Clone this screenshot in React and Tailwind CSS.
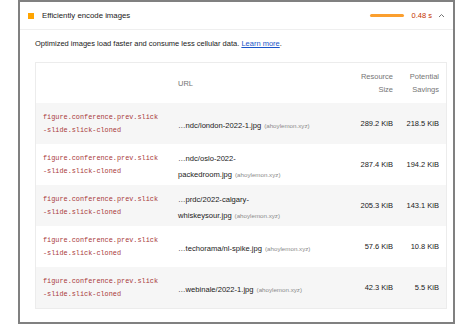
import React from "react";

const rows = [
  { url: ["…ndc/london-2022-1.jpg"], size: "289.2 KiB", save: "218.5 KiB" },
  { url: ["…ndc/oslo-2022-", "packedroom.jpg"], size: "287.4 KiB", save: "194.2 KiB" },
  { url: ["…prdc/2022-calgary-", "whiskeysour.jpg"], size: "205.3 KiB", save: "143.1 KiB" },
  { url: ["…techorama/nl-spike.jpg"], size: "57.6 KiB", save: "10.8 KiB" },
  { url: ["…webinale/2022-1.jpg"], size: "42.3 KiB", save: "5.5 KiB" },
];

function Url({ parts }) {
  const last = parts.length - 1;
  return (
    <div className="leading-[13px] whitespace-nowrap">
      {parts.map((p, i) => (
        <div key={i}>
          <span className="text-[7.6px] text-[#212121]">{p}</span>
          {i === last && (
            <span className="text-[6.2px] text-[#8a8a8a] ml-[3px]">(ahoylemon.xyz)</span>
          )}
        </div>
      ))}
    </div>
  );
}

export default function App() {
  return (
    <div className="w-[474px] h-[331px] bg-white overflow-hidden" style={{ fontFamily: '"Liberation Sans", Arial, sans-serif' }}>
      <div className="ml-[18px] w-[437px] h-[324px] border-2 border-[#808080] bg-white flex flex-col">
        <div className="flex items-center h-[28px] pl-[8px] pr-[8px] border-b border-[#efefef]">
          <div className="w-[6px] h-[6px] bg-[#ffa400]" />
          <div className="ml-[8px] text-[7.8px] text-[#212121] flex-1">Efficiently encode images</div>
          <div className="w-[34px] h-[3px] rounded-full bg-[#fb9f2e]" />
          <div className="ml-[8px] text-[7.5px] text-[#c33300]">0.48 s</div>
          <svg className="ml-[6px]" width="7" height="5" viewBox="0 0 7 5">
            <polyline points="1,4 3.5,1.5 6,4" fill="none" stroke="#757575" strokeWidth="1" />
          </svg>
        </div>
        <div className="pl-[15px] pt-[9px] text-[7.5px] text-[#212121] leading-[10px]">
          Optimized images load faster and consume less cellular data.{" "}
          <span className="text-[#1a55c9] underline">Learn more</span>.
        </div>
        <div className="ml-[15px] mr-[6px] mt-[13px] border border-[#ececec]">
          <div className="flex h-[40px] items-center text-[7.5px] text-[#757575] leading-[13px]">
            <div className="w-[134px]" />
            <div className="w-[175px] pl-[8px]">URL</div>
            <div className="w-[48px] text-right">Resource<br />Size</div>
            <div className="flex-1 text-right pr-[7px]">Potential<br />Savings</div>
          </div>
          {rows.map((r, i) => (
            <div key={i} className={"flex h-[41px] items-center " + (i % 2 === 0 ? "bg-[#f6f6f6]" : "bg-white")}>
              <div className="w-[134px] pl-[7px] text-[6.85px] leading-[13px] text-[#a8383a]" style={{ fontFamily: '"Liberation Mono", "DejaVu Sans Mono", monospace' }}>
                <div>figure.conference.prev.slick</div>
                <div>-slide.slick-cloned</div>
              </div>
              <div className="w-[175px] pl-[8px]">
                <Url parts={r.url} />
              </div>
              <div className="w-[48px] text-right text-[7.5px] text-[#212121]">{r.size}</div>
              <div className="flex-1 text-right pr-[7px] text-[7.5px] text-[#212121]">{r.save}</div>
            </div>
          ))}
        </div>
      </div>
    </div>
  );
}
